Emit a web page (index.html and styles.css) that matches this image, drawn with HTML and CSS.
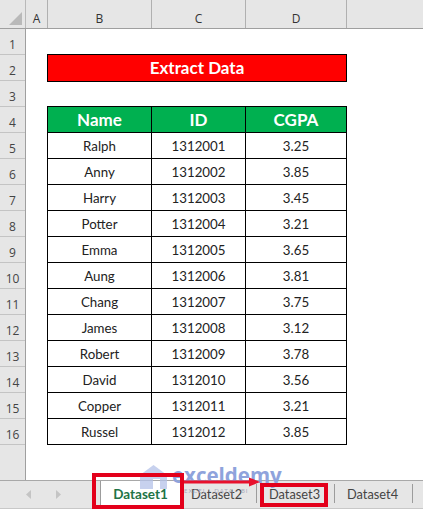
FILE: index.html
```html
<!DOCTYPE html>
<html lang="en">
<head>
  <meta charset="UTF-8">
  <meta name="viewport" content="width=device-width, initial-scale=1.0">
  <link rel="stylesheet" href="styles.css">
  <title>Extract Data</title>
</head>
<body>
  <div class="app">
    <div class="col-headers">
      <div class="corner"><svg width="13" height="13" viewBox="0 0 13 13"><path d="M13 0V13H0Z" fill="#b9b9b9"/></svg></div>
      <div class="col-head col-a">A</div>
      <div class="col-head col-b">B</div>
      <div class="col-head col-c">C</div>
      <div class="col-head col-d">D</div>
    </div>
    <div class="grid-area">
      <div class="row-headers">
        <div class="row-head">1</div>
        <div class="row-head">2</div>
        <div class="row-head">3</div>
        <div class="row-head">4</div>
        <div class="row-head">5</div>
        <div class="row-head">6</div>
        <div class="row-head">7</div>
        <div class="row-head">8</div>
        <div class="row-head">9</div>
        <div class="row-head">10</div>
        <div class="row-head">11</div>
        <div class="row-head">12</div>
        <div class="row-head">13</div>
        <div class="row-head">14</div>
        <div class="row-head">15</div>
        <div class="row-head">16</div>
      </div>
      <div class="sheet">
        <div class="title">Extract Data</div>
        <table class="data">
          <thead>
            <tr><th class="name">Name</th><th class="id">ID</th><th class="cgpa">CGPA</th></tr>
          </thead>
          <tbody>
            <tr><td>Ralph</td><td>1312001</td><td>3.25</td></tr>
            <tr><td>Anny</td><td>1312002</td><td>3.85</td></tr>
            <tr><td>Harry</td><td>1312003</td><td>3.45</td></tr>
            <tr><td>Potter</td><td>1312004</td><td>3.21</td></tr>
            <tr><td>Emma</td><td>1312005</td><td>3.65</td></tr>
            <tr><td>Aung</td><td>1312006</td><td>3.81</td></tr>
            <tr><td>Chang</td><td>1312007</td><td>3.75</td></tr>
            <tr><td>James</td><td>1312008</td><td>3.12</td></tr>
            <tr><td>Robert</td><td>1312009</td><td>3.78</td></tr>
            <tr><td>David</td><td>1312010</td><td>3.56</td></tr>
            <tr><td>Copper</td><td>1312011</td><td>3.21</td></tr>
            <tr><td>Russel</td><td>1312012</td><td>3.85</td></tr>
          </tbody>
        </table>
      </div>
    </div>
    <div class="tabbar">
      <div class="nav">
        <svg width="6" height="9" viewBox="0 0 6 9"><path d="M5 0V9L0 4.5Z" fill="#c4c4c4"/></svg>
        <svg width="6" height="9" viewBox="0 0 6 9"><path d="M1 0V9L6 4.5Z" fill="#c4c4c4"/></svg>
      </div>
      <div class="tab active">Dataset1</div>
      <div class="tab">Dataset2</div>
      <div class="tab">Dataset3</div>
      <div class="tab">Dataset4</div>
    </div>

    <!-- watermark and annotations lie over the tab bar -->
    <div class="watermark">
      <svg width="27" height="24" viewBox="0 0 27 24"><path d="M13.5 0L27 10V24H20V14H13V24H0V10Z" fill="#b4c2e8" opacity="0.75"/></svg>
      <span class="wm-text">exceldemy</span>
      <span class="wm-sub">EXCEL · DATA · BI</span>
    </div>
    <svg class="arrow" width="80" height="16" viewBox="0 0 80 16"><path d="M0 8H68" stroke="#e8112d" stroke-width="3"/><path d="M66 3.5L77 8L66 12.5Z" fill="#e8112d"/></svg>
    <div class="mark mark-one"></div>
    <div class="mark mark-two"></div>
  </div>
</body>
</html>
```

FILE: styles.css
```css
/* Reset default margin and padding */
body {
  margin: 0;
  padding: 0;
}

.app {
  position: relative;
  display: flex;
  flex-direction: column;
  width: 423px;
  height: 512px;
  overflow: hidden;
  background-color: #fff;
  font-family: "Lato", "Liberation Sans", sans-serif;
  color: #1a1a1a;
}

/* Column headers */
.col-headers {
  display: flex;
  height: 28px;
  background-color: #e6e6e6;
  border-bottom: 1px solid #9f9f9f;
  font-family: "Open Sans", sans-serif;
  font-size: 12px;
  color: #333;
}

.corner {
  width: 26px;
  display: flex;
  align-items: flex-end;
  justify-content: flex-end;
  padding: 0 3px 3px 0;
  box-sizing: border-box;
  border-right: 1px solid #b9b9b9;
}

.col-head {
  display: flex;
  align-items: center;
  justify-content: center;
  padding-top: 8px;
  box-sizing: border-box;
  border-right: 1px solid #b0b0b0;
}

.col-a { width: 22px; }
.col-b { width: 104px; }
.col-c { width: 94px; }
.col-d { width: 101px; }

/* Row headers and sheet */
.grid-area {
  display: flex;
  flex: 1;
  min-height: 0;
}

.row-headers {
  width: 25px;
  background-color: #e6e6e6;
  border-right: 1px solid #9f9f9f;
  font-family: "Open Sans", sans-serif;
  font-size: 12px;
  color: #444;
}

.row-head {
  height: 26px;
  box-sizing: border-box;
  padding-top: 7px;
  text-align: center;
  line-height: 18px;
  border-bottom: 1px solid #c4c4c4;
}

.sheet {
  padding: 25px 0 0 21px;
}

.title {
  width: 298px;
  height: 26px;
  border: 1px solid #000;
  background-color: #f00;
  color: #fff;
  font-weight: 700;
  font-size: 17px;
  line-height: 26px;
  text-align: center;
  margin-bottom: 24px;
}

.data {
  border-collapse: collapse;
  table-layout: fixed;
  width: 300px;
}

.data th,
.data td {
  border: 1px solid #000;
  height: 25px;
  padding: 0;
  text-align: center;
  box-sizing: content-box;
}

.data th {
  background-color: #00b050;
  color: #fff;
  font-size: 17px;
  font-weight: 700;
}

.data td {
  font-size: 13.3px;
  color: #222;
}

.name { width: 103px; }
.id { width: 93px; }
.cgpa { width: 100px; }

/* Sheet tabs */
.tabbar {
  display: flex;
  height: 27px;
  box-sizing: content-box;
  background-color: #e6e6e6;
  border-top: 1px solid #a8a8a8;
  border-bottom: 1px solid #c8c8c8;
  margin-bottom: 3px;
  font-size: 12.8px;
  color: #444;
}

.nav {
  width: 100px;
  display: flex;
  align-items: center;
  gap: 23px;
  padding-left: 26px;
  box-sizing: border-box;
}

.tab {
  width: 78px;
  display: flex;
  align-items: center;
  padding-left: 12px;
  box-sizing: border-box;
  border-right: 1px solid #9c9c9c;
  margin: 3px 0 5px;
}

.tab.active {
  width: 81px;
  justify-content: center;
  padding-left: 0;
  margin: 0 -2px 0 0;
  background-color: #fff;
  color: #217346;
  font-size: 13.5px;
  font-weight: 700;
  border-left: 1px solid #9c9c9c;
  border-right: 1px solid #9c9c9c;
  border-bottom: 2px solid #217346;
}

/* Overlays */
.watermark {
  position: absolute;
  left: 140px;
  top: 465px;
  width: 150px;
  height: 34px;
}

.watermark svg {
  position: absolute;
  left: 0;
  top: 0;
}

.wm-text {
  position: absolute;
  left: 32px;
  top: -4px;
  font-family: "Open Sans", sans-serif;
  font-size: 20.5px;
  font-weight: 700;
  color: #8fa3dc;
}

.wm-sub {
  position: absolute;
  left: 44px;
  top: 22px;
  font-size: 6px;
  letter-spacing: 1px;
  color: #aab;
}

.arrow {
  position: absolute;
  left: 183px;
  top: 474px;
}

.mark {
  position: absolute;
  box-sizing: border-box;
  border: 4px solid #e3001b;
}

.mark-one {
  left: 92px;
  top: 473px;
  width: 92px;
  height: 36px;
}

.mark-two {
  left: 260px;
  top: 483px;
  width: 68px;
  height: 24px;
}
```
